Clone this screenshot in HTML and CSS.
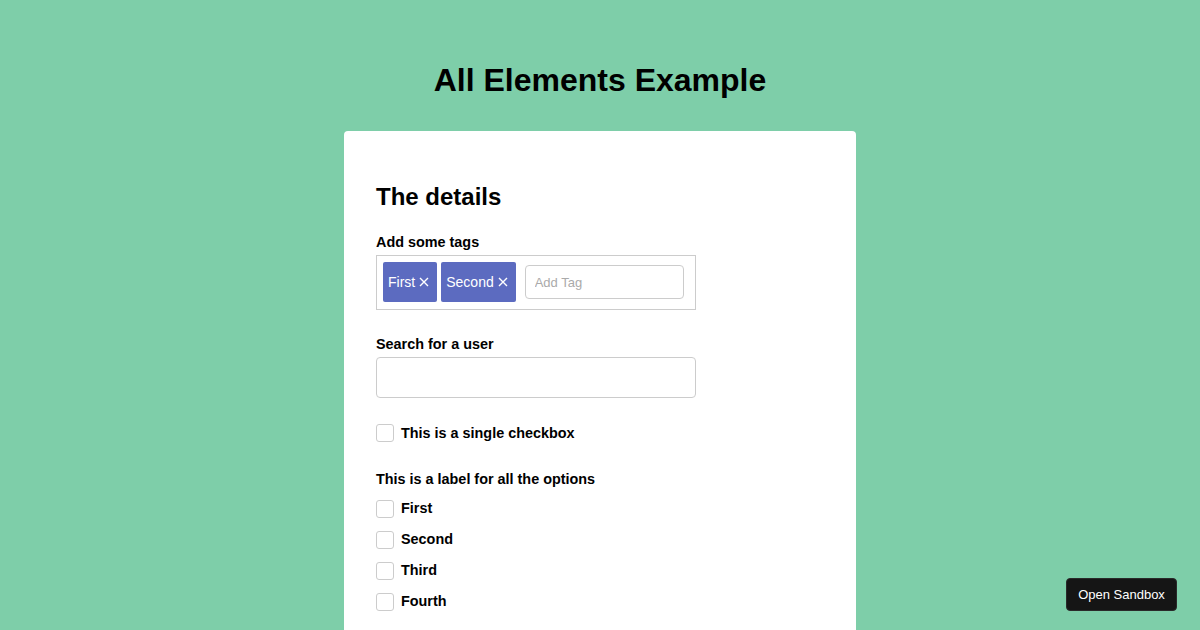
FILE: index.html
```html
<!DOCTYPE html>
<html lang="en">
<head>
  <meta charset="UTF-8" />
  <meta name="viewport" content="width=device-width, initial-scale=1.0">
  <title>All Elements Example</title>
  <link rel="stylesheet" href="styles.css">
</head>
<body>

  <h1 class="pageTitle">All Elements Example</h1>

  <div class="card">
    <h2>The details</h2>

    <!-- Tags -->
    <div class="field">
      <label class="fieldLabel">Add some tags</label>
      <div class="tagBox">
        <span class="tag">First
          <svg viewBox="0 0 10 10" width="10" height="10"><path d="M1 1L9 9M9 1L1 9" stroke="#fff" stroke-width="1.4" fill="none"/></svg>
        </span>
        <span class="tag">Second
          <svg viewBox="0 0 10 10" width="10" height="10"><path d="M1 1L9 9M9 1L1 9" stroke="#fff" stroke-width="1.4" fill="none"/></svg>
        </span>
        <input class="tagInput" type="text" placeholder="Add Tag">
      </div>
    </div>

    <!-- Search -->
    <div class="field">
      <label class="fieldLabel">Search for a user</label>
      <input class="textInput" type="text">
    </div>

    <label class="check single">
      <span class="box"></span>
      This is a single checkbox
    </label>

    <div class="field options">
      <label class="fieldLabel">This is a label for all the options</label>
      <label class="check"><span class="box"></span>First</label>
      <label class="check"><span class="box"></span>Second</label>
      <label class="check"><span class="box"></span>Third</label>
      <label class="check"><span class="box"></span>Fourth</label>
    </div>
  </div>

  <button class="sandboxBtn">Open Sandbox</button>

</body>
</html>
```

FILE: styles.css
```css
* { margin: 0; padding: 0; box-sizing: border-box; }
html, body {
  font-family: 'Liberation Sans', Arial, sans-serif;
  background: #7ecea9;
  color: #000;
  height: 100vh;
  overflow: hidden;
}

.pageTitle {
  font-size: 32px;
  font-weight: bold;
  text-align: center;
  line-height: 37px;
  padding-top: 62px;
  margin-bottom: 32px;
}

.card {
  width: 512px;
  margin: 0 auto;
  background: #fff;
  border-radius: 4px;
  padding: 52px 32px 40px;
  display: flex;
  flex-direction: column;
  align-items: flex-start;
}

.card h2 {
  font-size: 24px;
  line-height: 28px;
  margin-bottom: 23px;
}

.field {
  display: flex;
  flex-direction: column;
  align-items: flex-start;
}

.fieldLabel {
  font-size: 14.4px;
  font-weight: bold;
  line-height: 17px;
  margin-bottom: 4px;
}

.tagBox {
  width: 320px;
  height: 55px;
  border: 1px solid #ccc;
  padding: 6px 11px 7px 6px;
  display: flex;
  align-items: center;
  gap: 4px;
}

.tag {
  height: 40px;
  background: #5c6bc0;
  color: #fff;
  font-size: 14px;
  border-radius: 2px;
  padding: 0 8px 0 5px;
  display: flex;
  align-items: center;
  gap: 4px;
}

.tagInput {
  margin-left: 5px;
  width: 160px;
  min-width: 0;
  height: 34px;
  border: 1px solid #ccc;
  border-radius: 4px;
  padding: 0 9px;
  font-family: inherit;
  font-size: 13px;
  outline: none;
}
.tagInput::placeholder { color: #aaa; }

.field + .field { margin-top: 26px; }

.textInput {
  width: 320px;
  height: 41px;
  border: 1px solid #ccc;
  border-radius: 4px;
  outline: none;
}

.check {
  display: flex;
  align-items: center;
  gap: 7px;
  font-size: 14.4px;
  font-weight: bold;
  line-height: 17px;
}

.box {
  width: 18px;
  height: 18px;
  border: 1px solid #ccc;
  border-radius: 3px;
  background: #fff;
}

.single { margin-top: 26px; }

.options { margin-top: 29px; }
.options .fieldLabel { margin-bottom: 5px; }
.options .check { height: 31px; }

.sandboxBtn {
  position: absolute;
  right: 23px;
  bottom: 19px;
  width: 111px;
  height: 33px;
  background: #151515;
  color: #fff;
  border: 1px solid #2a2a2a;
  border-radius: 4px;
  font-family: inherit;
  font-size: 13px;
}
```
